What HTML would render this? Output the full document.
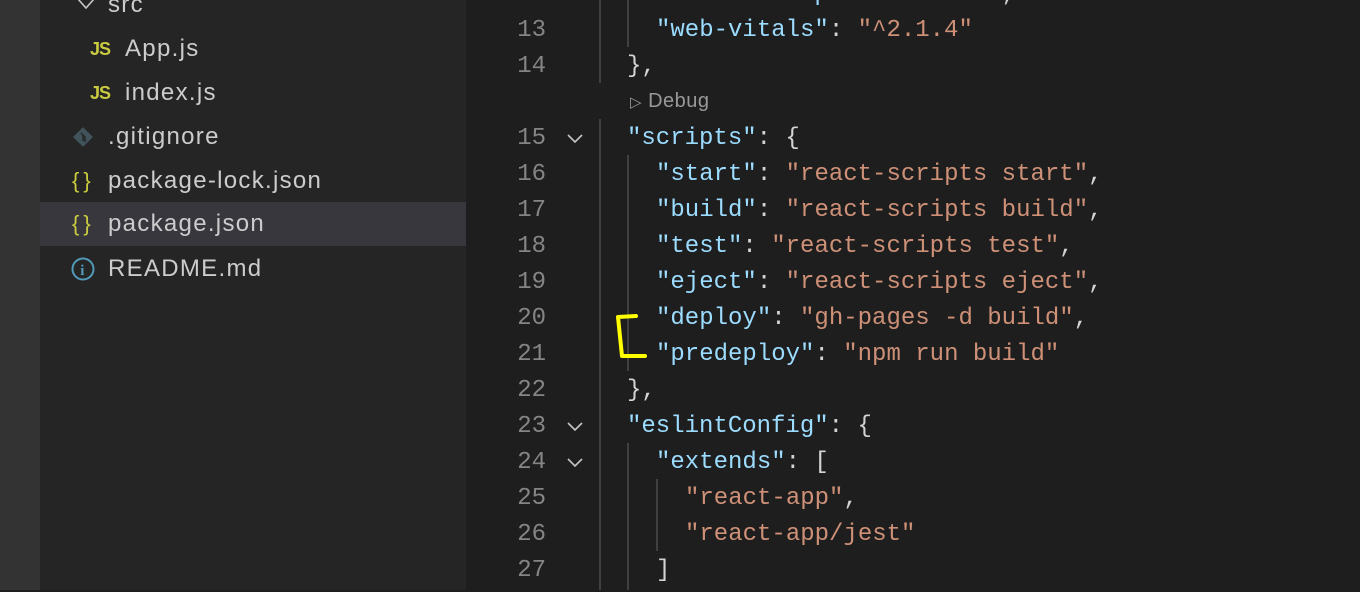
<!DOCTYPE html>
<html><head><meta charset="utf-8"><style>
*{margin:0;padding:0;box-sizing:border-box}
body{width:1360px;height:590px;overflow:hidden;background:#1e1e1e;position:relative;font-family:"Liberation Sans",sans-serif}
.act{position:absolute;left:0;top:0;width:40px;height:590px;background:#333333}
.side{position:absolute;left:40px;top:0;width:426px;height:590px;background:#252526}
.row{position:absolute;left:0;width:426px;height:44px;color:#cccccc;font-size:24px;letter-spacing:1.3px;line-height:44px}
.sel{background:#37373d}
.row span{position:absolute}
.js{color:#cbcb41;font-weight:bold;font-size:18px;letter-spacing:-1px}
.br{color:#cbcb41;font-size:22px;letter-spacing:4px}
.ln{position:absolute;left:466px;width:80px;text-align:right;color:#858585;font-family:"Liberation Mono",monospace;font-size:24px;line-height:36px;height:36px}
.code{position:absolute;left:627px;font-family:"Liberation Mono",monospace;font-size:24px;line-height:36px;height:36px;white-space:pre;color:#d4d4d4}
.k{color:#9cdcfe}.s{color:#ce9178}
.g{position:absolute;width:2px;background:#404040}
.chev{position:absolute;left:566px;width:18px;height:18px}
.m{position:absolute;top:2px;left:0;width:1360px;height:590px}
</style></head><body>
<div class="act"></div>
<div class="side">
<div class="row" style="top:-17px"><svg style="position:absolute;left:36px;top:14px" width="20" height="14" viewBox="0 0 20 14"><path d="M2 2l8 9 8-9" stroke="#c5c5c5" stroke-width="1.6" fill="none"/></svg><span style="left:68px">src</span></div>
<div class="row" style="top:27px"><span class="js" style="left:50px">JS</span><span style="left:85px">App.js</span></div>
<div class="row" style="top:71px"><span class="js" style="left:50px">JS</span><span style="left:85px">index.js</span></div>
<div class="row" style="top:115px"><svg style="position:absolute;left:32px;top:11px" width="22" height="22" viewBox="0 0 22 22"><rect x="4" y="4" width="14" height="14" transform="rotate(45 11 11)" fill="#41535b"/><path d="M9 7l4 4v5M11 9v6" stroke="#252526" stroke-width="1.5" fill="none"/></svg><span style="left:68px">.gitignore</span></div>
<div class="row" style="top:159px"><span class="br" style="left:32px">{}</span><span style="left:68px">package-lock.json</span></div>
<div class="row sel" style="top:202px"><span class="br" style="left:32px">{}</span><span style="left:68px">package.json</span></div>
<div class="row" style="top:247px"><svg style="position:absolute;left:31px;top:10px" width="24" height="24" viewBox="0 0 24 24"><circle cx="12" cy="12" r="10.5" fill="none" stroke="#519aba" stroke-width="2"/><text x="12" y="18" text-anchor="middle" fill="#519aba" font-family="Liberation Serif" font-weight="bold" font-size="15">i</text></svg><span style="left:68px">README.md</span></div>
</div>
<div class="g" style="left:599px;top:0;height:83px"></div>
<div class="g" style="left:627px;top:0;height:47px"></div>
<div class="g" style="left:599px;top:119px;height:471px"></div>
<div class="g" style="left:627px;top:155px;height:216px"></div>
<div class="g" style="left:627px;top:443px;height:147px"></div>
<div class="g" style="left:656px;top:479px;height:72px"></div>
<div class="m">
<div class="ln" style="top:-25px">12</div><div class="code" style="top:-25px;left:656px"><span class="k">"react-scripts"</span>: <span class="s">"5.0.1"</span>,</div>
<div class="ln" style="top:11px">13</div><div class="code" style="top:11px;left:656px"><span class="k">"web-vitals"</span>: <span class="s">"^2.1.4"</span></div>
<div class="ln" style="top:47px">14</div><div class="code" style="top:47px">},</div>
<div class="ln" style="top:119px">15</div><div class="code" style="top:119px"><span class="k">"scripts"</span>: {</div>
<div class="ln" style="top:155px">16</div><div class="code" style="top:155px;left:656px"><span class="k">"start"</span>: <span class="s">"react-scripts start"</span>,</div>
<div class="ln" style="top:191px">17</div><div class="code" style="top:191px;left:656px"><span class="k">"build"</span>: <span class="s">"react-scripts build"</span>,</div>
<div class="ln" style="top:227px">18</div><div class="code" style="top:227px;left:656px"><span class="k">"test"</span>: <span class="s">"react-scripts test"</span>,</div>
<div class="ln" style="top:263px">19</div><div class="code" style="top:263px;left:656px"><span class="k">"eject"</span>: <span class="s">"react-scripts eject"</span>,</div>
<div class="ln" style="top:299px">20</div><div class="code" style="top:299px;left:656px"><span class="k">"deploy"</span>: <span class="s">"gh-pages -d build"</span>,</div>
<div class="ln" style="top:335px">21</div><div class="code" style="top:335px;left:656px"><span class="k">"predeploy"</span>: <span class="s">"npm run build"</span></div>
<div class="ln" style="top:371px">22</div><div class="code" style="top:371px">},</div>
<div class="ln" style="top:407px">23</div><div class="code" style="top:407px"><span class="k">"eslintConfig"</span>: {</div>
<div class="ln" style="top:443px">24</div><div class="code" style="top:443px;left:656px"><span class="k">"extends"</span>: [</div>
<div class="ln" style="top:479px">25</div><div class="code" style="top:479px;left:685px"><span class="s">"react-app"</span>,</div>
<div class="ln" style="top:515px">26</div><div class="code" style="top:515px;left:685px"><span class="s">"react-app/jest"</span></div>
<div class="ln" style="top:551px">27</div><div class="code" style="top:551px;left:656px">]</div>
</div>
<div style="position:absolute;left:630px;top:89px;color:#999;font-size:20px;line-height:24px;letter-spacing:0.5px"><span style="font-size:15px">&#9655;</span> Debug</div>

<svg class="chev" style="top:129px" viewBox="0 0 18 18"><path d="M2 6l7 7 7-7" stroke="#c5c5c5" stroke-width="1.6" fill="none"/></svg>
<svg class="chev" style="top:417px" viewBox="0 0 18 18"><path d="M2 6l7 7 7-7" stroke="#c5c5c5" stroke-width="1.6" fill="none"/></svg>
<svg class="chev" style="top:453px" viewBox="0 0 18 18"><path d="M2 6l7 7 7-7" stroke="#c5c5c5" stroke-width="1.6" fill="none"/></svg>
<svg style="position:absolute;left:612px;top:310px" width="40" height="55" viewBox="0 0 40 55"><path d="M24 6 L6 7 L10 46 L33 46" stroke="#ffff00" stroke-width="4" fill="none" stroke-linecap="round" stroke-linejoin="round"/></svg>
</body></html>
